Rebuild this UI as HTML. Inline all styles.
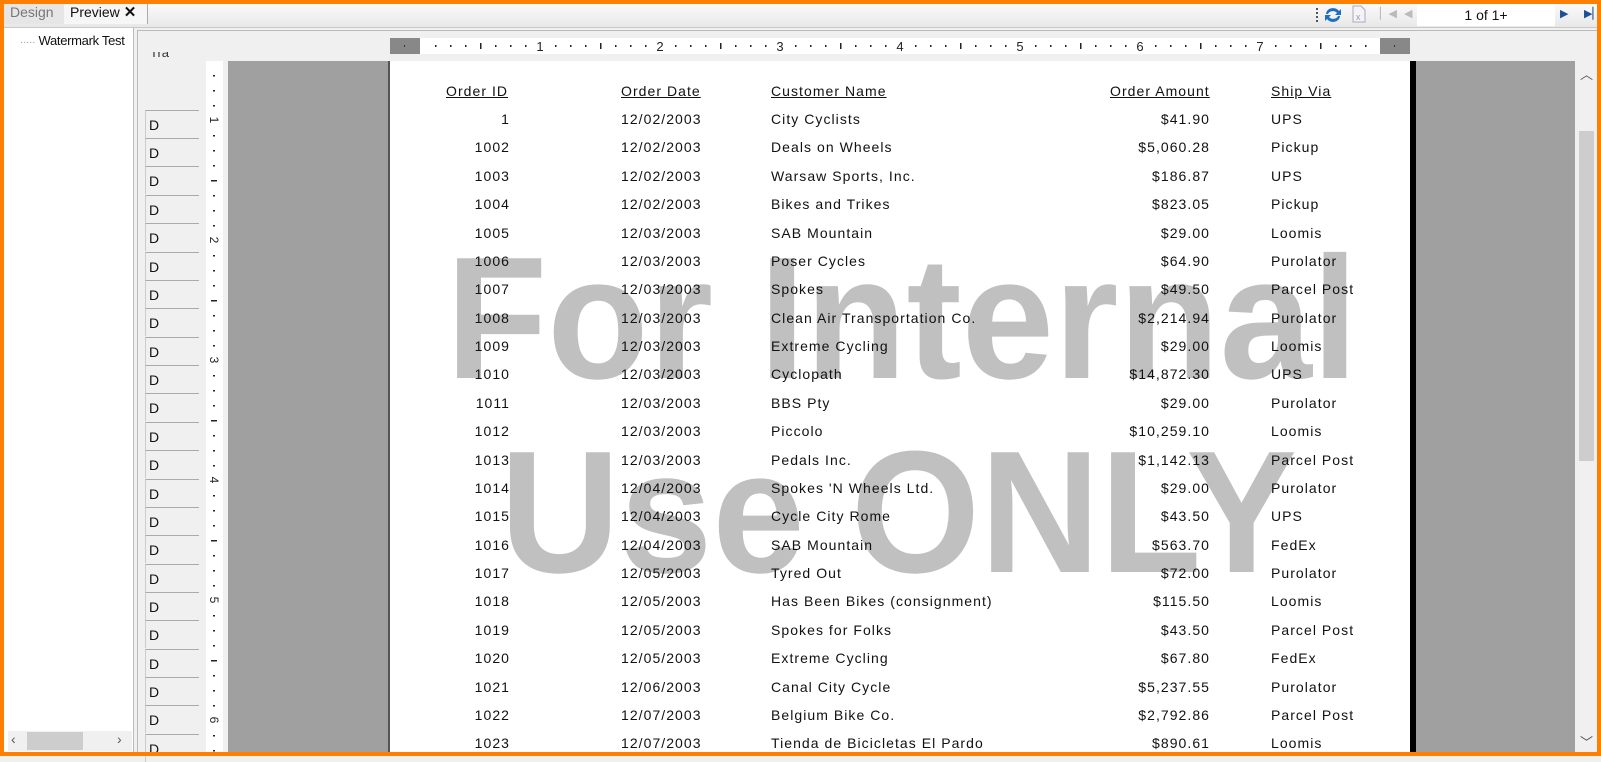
<!DOCTYPE html>
<html><head><meta charset="utf-8"><style>
*{margin:0;padding:0;box-sizing:border-box}
body{width:1601px;height:756px;overflow:hidden;background:#f0f0f0;font-family:"Liberation Sans",Arial,sans-serif;position:relative}
.a{position:absolute}
.tabbar{left:4px;top:4px;width:1593px;height:24px;background:linear-gradient(#fafafa,#e8e8e8);border-bottom:1px solid #c8c8c8}
.tab{top:0;height:24px;font-size:14px;line-height:24px;padding:0 6px}
.left{left:4px;top:28px;width:130px;height:724px;background:#fff;border-right:1px solid #bbb}
.main{left:137px;top:30px;width:1460px;height:722px;background:#f0f0f0;border-top:1px solid #bbb;border-left:1px solid #bbb}
.t{position:absolute;font-size:14px;letter-spacing:1.05px;color:#111;white-space:nowrap;line-height:16px}
.r{text-align:right}
.h{text-decoration:underline}
.d{position:absolute;left:145px;width:54px;height:28px;border-top:1px solid #aaa;border-left:1px solid #ccc;font-size:14px;padding:6px 0 0 3px;color:#111}
</style></head><body>
<div class="a tabbar"></div>
<div class="a tab" style="left:4px;width:60px;color:#777;background:#e6e6e6">Design</div>
<div class="a tab" style="left:64px;width:84px;background:#f6f6f6;border-right:1px solid #aaa;color:#111">Preview <b style="font-size:15px">✕</b></div>
<div class="a" style="left:1316px;top:8px;width:2px;height:14px;border-left:2px dotted #555"></div>
<svg class="a" style="left:1322px;top:5px" width="22" height="20" viewBox="0 0 22 20"><path d="M4 9a7 6 0 0 1 13-3l2-2v6h-6l2-2a5 4 0 0 0-9 1z" fill="#1e6fc0"/><path d="M18 11a7 6 0 0 1-13 3l-2 2v-6h6l-2 2a5 4 0 0 0 9-1z" fill="#1e6fc0"/></svg>
<svg class="a" style="left:1352px;top:5px" width="14" height="18"><path d="M1 1h8l4 4v12H1z" fill="#f4f4f8" stroke="#aab"/><text x="4" y="15" font-size="9" fill="#99a" font-family="Liberation Sans">x</text></svg>
<div class="a" style="left:1380px;top:7px;color:#bbb;font-size:11px">▏◀</div>
<div class="a" style="left:1404px;top:7px;color:#bbb;font-size:11px">◀</div>
<div class="a" style="left:1417px;top:4px;width:138px;height:22px;background:#fff;font-size:14px;text-align:center;line-height:22px;color:#111">1 of 1+</div>
<div class="a" style="left:1560px;top:7px;color:#1e4f96;font-size:11px">▶</div>
<div class="a" style="left:1584px;top:7px;color:#1e4f96;font-size:11px">▶▏</div>
<div class="a left"></div>
<div class="a" style="left:20px;top:33px;font-size:13px;color:#111;letter-spacing:-0.3px"><span style="color:#999;font-size:10px">·····</span> Watermark Test</div>
<div class="a" style="left:8px;top:731px;width:124px;height:20px;background:#f0f0f0"></div>
<div class="a" style="left:27px;top:732px;width:56px;height:18px;background:#cdcdcd"></div>
<div class="a" style="left:11px;top:731px;font-size:14px;color:#555">‹</div>
<div class="a" style="left:117px;top:731px;font-size:14px;color:#555">›</div>
<div class="a main"></div>
<!-- horizontal ruler -->
<div class="a" style="left:390px;top:38px;width:1020px;height:16px;background:#fff"></div>
<div class="a" style="left:390px;top:38px;width:30px;height:16px;background:#888"></div>
<div class="a" style="left:1380px;top:38px;width:30px;height:16px;background:#888"></div>
<svg class="a" style="left:390px;top:38px" width="1020" height="16">
<g fill="#333"><rect x="14" y="7" width="1" height="2"/><rect x="1004" y="7" width="1" height="2"/></g>
<g fill="#222" font-size="13" font-family="Liberation Sans" text-anchor="middle">
<text x="150" y="13">1</text><text x="270" y="13">2</text><text x="390" y="13">3</text><text x="510" y="13">4</text><text x="630" y="13">5</text><text x="750" y="13">6</text><text x="870" y="13">7</text>
</g>
<g fill="#222">
<rect x="45" y="7" width="1.5" height="2"/><rect x="60" y="7" width="1.5" height="2"/><rect x="75" y="7" width="1.5" height="2"/><rect x="90" y="5" width="1.5" height="6"/><rect x="105" y="7" width="1.5" height="2"/><rect x="120" y="7" width="1.5" height="2"/><rect x="135" y="7" width="1.5" height="2"/>
<rect x="165" y="7" width="1.5" height="2"/><rect x="180" y="7" width="1.5" height="2"/><rect x="195" y="7" width="1.5" height="2"/><rect x="210" y="5" width="1.5" height="6"/><rect x="225" y="7" width="1.5" height="2"/><rect x="240" y="7" width="1.5" height="2"/><rect x="255" y="7" width="1.5" height="2"/>
<rect x="285" y="7" width="1.5" height="2"/><rect x="300" y="7" width="1.5" height="2"/><rect x="315" y="7" width="1.5" height="2"/><rect x="330" y="5" width="1.5" height="6"/><rect x="345" y="7" width="1.5" height="2"/><rect x="360" y="7" width="1.5" height="2"/><rect x="375" y="7" width="1.5" height="2"/>
<rect x="405" y="7" width="1.5" height="2"/><rect x="420" y="7" width="1.5" height="2"/><rect x="435" y="7" width="1.5" height="2"/><rect x="450" y="5" width="1.5" height="6"/><rect x="465" y="7" width="1.5" height="2"/><rect x="480" y="7" width="1.5" height="2"/><rect x="495" y="7" width="1.5" height="2"/>
<rect x="525" y="7" width="1.5" height="2"/><rect x="540" y="7" width="1.5" height="2"/><rect x="555" y="7" width="1.5" height="2"/><rect x="570" y="5" width="1.5" height="6"/><rect x="585" y="7" width="1.5" height="2"/><rect x="600" y="7" width="1.5" height="2"/><rect x="615" y="7" width="1.5" height="2"/>
<rect x="645" y="7" width="1.5" height="2"/><rect x="660" y="7" width="1.5" height="2"/><rect x="675" y="7" width="1.5" height="2"/><rect x="690" y="5" width="1.5" height="6"/><rect x="705" y="7" width="1.5" height="2"/><rect x="720" y="7" width="1.5" height="2"/><rect x="735" y="7" width="1.5" height="2"/>
<rect x="765" y="7" width="1.5" height="2"/><rect x="780" y="7" width="1.5" height="2"/><rect x="795" y="7" width="1.5" height="2"/><rect x="810" y="5" width="1.5" height="6"/><rect x="825" y="7" width="1.5" height="2"/><rect x="840" y="7" width="1.5" height="2"/><rect x="855" y="7" width="1.5" height="2"/>
<rect x="885" y="7" width="1.5" height="2"/><rect x="900" y="7" width="1.5" height="2"/><rect x="915" y="7" width="1.5" height="2"/><rect x="930" y="5" width="1.5" height="6"/><rect x="945" y="7" width="1.5" height="2"/><rect x="960" y="7" width="1.5" height="2"/><rect x="975" y="7" width="1.5" height="2"/>
</g>
</svg>
<!-- left label column -->
<div class="a" style="left:150px;top:52px;font-size:13px;color:#333;height:10px;overflow:hidden;line-height:10px"><span style="position:relative;top:-4px">Tra</span></div>
<div class="d" style="top:110px">D</div><div class="d" style="top:138px">D</div><div class="d" style="top:166px">D</div><div class="d" style="top:195px">D</div><div class="d" style="top:223px">D</div><div class="d" style="top:252px">D</div><div class="d" style="top:280px">D</div><div class="d" style="top:308px">D</div><div class="d" style="top:337px">D</div><div class="d" style="top:365px">D</div><div class="d" style="top:393px">D</div><div class="d" style="top:422px">D</div><div class="d" style="top:450px">D</div><div class="d" style="top:479px">D</div><div class="d" style="top:507px">D</div><div class="d" style="top:535px">D</div><div class="d" style="top:564px">D</div><div class="d" style="top:592px">D</div><div class="d" style="top:620px">D</div><div class="d" style="top:649px">D</div><div class="d" style="top:677px">D</div><div class="d" style="top:705px">D</div><div class="d" style="top:734px">D</div>
<!-- vertical ruler -->
<svg class="a" style="left:206px;top:61px" width="17" height="691">
<rect width="17" height="691" fill="#fff"/>
<g fill="#222">
<rect x="7" y="14" width="2" height="1.5"/><rect x="7" y="29" width="2" height="1.5"/><rect x="7" y="44" width="2" height="1.5"/><rect x="7" y="74" width="2" height="1.5"/><rect x="7" y="89" width="2" height="1.5"/><rect x="7" y="104" width="2" height="1.5"/>
<rect x="5" y="119" width="6" height="1.5"/><rect x="5" y="239" width="6" height="1.5"/><rect x="5" y="359" width="6" height="1.5"/><rect x="5" y="479" width="6" height="1.5"/><rect x="5" y="599" width="6" height="1.5"/>
<rect x="7" y="134" width="2" height="1.5"/><rect x="7" y="149" width="2" height="1.5"/><rect x="7" y="164" width="2" height="1.5"/><rect x="7" y="194" width="2" height="1.5"/><rect x="7" y="209" width="2" height="1.5"/><rect x="7" y="224" width="2" height="1.5"/>
<rect x="7" y="254" width="2" height="1.5"/><rect x="7" y="269" width="2" height="1.5"/><rect x="7" y="284" width="2" height="1.5"/><rect x="7" y="314" width="2" height="1.5"/><rect x="7" y="329" width="2" height="1.5"/><rect x="7" y="344" width="2" height="1.5"/>
<rect x="7" y="374" width="2" height="1.5"/><rect x="7" y="389" width="2" height="1.5"/><rect x="7" y="404" width="2" height="1.5"/><rect x="7" y="434" width="2" height="1.5"/><rect x="7" y="449" width="2" height="1.5"/><rect x="7" y="464" width="2" height="1.5"/>
<rect x="7" y="494" width="2" height="1.5"/><rect x="7" y="509" width="2" height="1.5"/><rect x="7" y="524" width="2" height="1.5"/><rect x="7" y="554" width="2" height="1.5"/><rect x="7" y="569" width="2" height="1.5"/><rect x="7" y="584" width="2" height="1.5"/>
<rect x="7" y="614" width="2" height="1.5"/><rect x="7" y="629" width="2" height="1.5"/><rect x="7" y="644" width="2" height="1.5"/><rect x="7" y="674" width="2" height="1.5"/><rect x="7" y="689" width="2" height="1.5"/>
</g>
<g font-size="12" font-family="Liberation Sans" fill="#222">
<text transform="translate(4,59) rotate(90)" text-anchor="middle">1</text>
<text transform="translate(4,179) rotate(90)" text-anchor="middle">2</text>
<text transform="translate(4,299) rotate(90)" text-anchor="middle">3</text>
<text transform="translate(4,419) rotate(90)" text-anchor="middle">4</text>
<text transform="translate(4,539) rotate(90)" text-anchor="middle">5</text>
<text transform="translate(4,659) rotate(90)" text-anchor="middle">6</text>
</g>
</svg>
<!-- gray area & page -->
<div class="a" style="left:228px;top:61px;width:1347px;height:691px;background:#a0a0a0"></div>
<div class="a" style="left:388px;top:61px;width:2px;height:691px;background:#555"></div>
<div class="a" style="left:390px;top:61px;width:1020px;height:691px;background:#fff"></div>
<div class="a" style="left:1410px;top:61px;width:6px;height:691px;background:#000"></div>
<!-- vertical scrollbar -->
<div class="a" style="left:1575px;top:61px;width:22px;height:691px;background:#f0f0f0"></div>
<div class="a" style="left:1579px;top:131px;width:15px;height:330px;background:#cdcdcd"></div>
<div class="a" style="left:1580px;top:64px;font-size:13px;color:#555">︿</div>
<div class="a" style="left:1580px;top:732px;font-size:13px;color:#555">﹀</div>
<!-- watermark -->
<svg class="a" style="left:0;top:0" width="1601" height="756">
<g fill="#c0c0c0" font-family="Liberation Sans" font-weight="bold" font-size="174">
<text x="446" y="378" textLength="912" lengthAdjust="spacingAndGlyphs">For Internal</text>
<text x="500" y="572" textLength="797" lengthAdjust="spacingAndGlyphs">Use ONLY</text>
</g>
</svg>
<!-- table -->
<div class="t h" style="left:446px;top:83px">Order ID</div>
<div class="t h" style="left:621px;top:83px">Order Date</div>
<div class="t h" style="left:771px;top:83px">Customer Name</div>
<div class="t h" style="left:1110px;top:83px">Order Amount</div>
<div class="t h" style="left:1271px;top:83px">Ship Via</div>
<div class="t r" style="left:400px;width:110px;top:111px">1</div><div class="t" style="left:621px;top:111px">12/02/2003</div><div class="t" style="left:771px;top:111px">City Cyclists</div><div class="t r" style="left:1060px;width:150px;top:111px">$41.90</div><div class="t" style="left:1271px;top:111px">UPS</div>
<div class="t r" style="left:400px;width:110px;top:139px">1002</div><div class="t" style="left:621px;top:139px">12/02/2003</div><div class="t" style="left:771px;top:139px">Deals on Wheels</div><div class="t r" style="left:1060px;width:150px;top:139px">$5,060.28</div><div class="t" style="left:1271px;top:139px">Pickup</div>
<div class="t r" style="left:400px;width:110px;top:168px">1003</div><div class="t" style="left:621px;top:168px">12/02/2003</div><div class="t" style="left:771px;top:168px">Warsaw Sports, Inc.</div><div class="t r" style="left:1060px;width:150px;top:168px">$186.87</div><div class="t" style="left:1271px;top:168px">UPS</div>
<div class="t r" style="left:400px;width:110px;top:196px">1004</div><div class="t" style="left:621px;top:196px">12/02/2003</div><div class="t" style="left:771px;top:196px">Bikes and Trikes</div><div class="t r" style="left:1060px;width:150px;top:196px">$823.05</div><div class="t" style="left:1271px;top:196px">Pickup</div>
<div class="t r" style="left:400px;width:110px;top:225px">1005</div><div class="t" style="left:621px;top:225px">12/03/2003</div><div class="t" style="left:771px;top:225px">SAB Mountain</div><div class="t r" style="left:1060px;width:150px;top:225px">$29.00</div><div class="t" style="left:1271px;top:225px">Loomis</div>
<div class="t r" style="left:400px;width:110px;top:253px">1006</div><div class="t" style="left:621px;top:253px">12/03/2003</div><div class="t" style="left:771px;top:253px">Poser Cycles</div><div class="t r" style="left:1060px;width:150px;top:253px">$64.90</div><div class="t" style="left:1271px;top:253px">Purolator</div>
<div class="t r" style="left:400px;width:110px;top:281px">1007</div><div class="t" style="left:621px;top:281px">12/03/2003</div><div class="t" style="left:771px;top:281px">Spokes</div><div class="t r" style="left:1060px;width:150px;top:281px">$49.50</div><div class="t" style="left:1271px;top:281px">Parcel Post</div>
<div class="t r" style="left:400px;width:110px;top:310px">1008</div><div class="t" style="left:621px;top:310px">12/03/2003</div><div class="t" style="left:771px;top:310px">Clean Air Transportation Co.</div><div class="t r" style="left:1060px;width:150px;top:310px">$2,214.94</div><div class="t" style="left:1271px;top:310px">Purolator</div>
<div class="t r" style="left:400px;width:110px;top:338px">1009</div><div class="t" style="left:621px;top:338px">12/03/2003</div><div class="t" style="left:771px;top:338px">Extreme Cycling</div><div class="t r" style="left:1060px;width:150px;top:338px">$29.00</div><div class="t" style="left:1271px;top:338px">Loomis</div>
<div class="t r" style="left:400px;width:110px;top:366px">1010</div><div class="t" style="left:621px;top:366px">12/03/2003</div><div class="t" style="left:771px;top:366px">Cyclopath</div><div class="t r" style="left:1060px;width:150px;top:366px">$14,872.30</div><div class="t" style="left:1271px;top:366px">UPS</div>
<div class="t r" style="left:400px;width:110px;top:395px">1011</div><div class="t" style="left:621px;top:395px">12/03/2003</div><div class="t" style="left:771px;top:395px">BBS Pty</div><div class="t r" style="left:1060px;width:150px;top:395px">$29.00</div><div class="t" style="left:1271px;top:395px">Purolator</div>
<div class="t r" style="left:400px;width:110px;top:423px">1012</div><div class="t" style="left:621px;top:423px">12/03/2003</div><div class="t" style="left:771px;top:423px">Piccolo</div><div class="t r" style="left:1060px;width:150px;top:423px">$10,259.10</div><div class="t" style="left:1271px;top:423px">Loomis</div>
<div class="t r" style="left:400px;width:110px;top:452px">1013</div><div class="t" style="left:621px;top:452px">12/03/2003</div><div class="t" style="left:771px;top:452px">Pedals Inc.</div><div class="t r" style="left:1060px;width:150px;top:452px">$1,142.13</div><div class="t" style="left:1271px;top:452px">Parcel Post</div>
<div class="t r" style="left:400px;width:110px;top:480px">1014</div><div class="t" style="left:621px;top:480px">12/04/2003</div><div class="t" style="left:771px;top:480px">Spokes 'N Wheels Ltd.</div><div class="t r" style="left:1060px;width:150px;top:480px">$29.00</div><div class="t" style="left:1271px;top:480px">Purolator</div>
<div class="t r" style="left:400px;width:110px;top:508px">1015</div><div class="t" style="left:621px;top:508px">12/04/2003</div><div class="t" style="left:771px;top:508px">Cycle City Rome</div><div class="t r" style="left:1060px;width:150px;top:508px">$43.50</div><div class="t" style="left:1271px;top:508px">UPS</div>
<div class="t r" style="left:400px;width:110px;top:537px">1016</div><div class="t" style="left:621px;top:537px">12/04/2003</div><div class="t" style="left:771px;top:537px">SAB Mountain</div><div class="t r" style="left:1060px;width:150px;top:537px">$563.70</div><div class="t" style="left:1271px;top:537px">FedEx</div>
<div class="t r" style="left:400px;width:110px;top:565px">1017</div><div class="t" style="left:621px;top:565px">12/05/2003</div><div class="t" style="left:771px;top:565px">Tyred Out</div><div class="t r" style="left:1060px;width:150px;top:565px">$72.00</div><div class="t" style="left:1271px;top:565px">Purolator</div>
<div class="t r" style="left:400px;width:110px;top:593px">1018</div><div class="t" style="left:621px;top:593px">12/05/2003</div><div class="t" style="left:771px;top:593px">Has Been Bikes (consignment)</div><div class="t r" style="left:1060px;width:150px;top:593px">$115.50</div><div class="t" style="left:1271px;top:593px">Loomis</div>
<div class="t r" style="left:400px;width:110px;top:622px">1019</div><div class="t" style="left:621px;top:622px">12/05/2003</div><div class="t" style="left:771px;top:622px">Spokes for Folks</div><div class="t r" style="left:1060px;width:150px;top:622px">$43.50</div><div class="t" style="left:1271px;top:622px">Parcel Post</div>
<div class="t r" style="left:400px;width:110px;top:650px">1020</div><div class="t" style="left:621px;top:650px">12/05/2003</div><div class="t" style="left:771px;top:650px">Extreme Cycling</div><div class="t r" style="left:1060px;width:150px;top:650px">$67.80</div><div class="t" style="left:1271px;top:650px">FedEx</div>
<div class="t r" style="left:400px;width:110px;top:679px">1021</div><div class="t" style="left:621px;top:679px">12/06/2003</div><div class="t" style="left:771px;top:679px">Canal City Cycle</div><div class="t r" style="left:1060px;width:150px;top:679px">$5,237.55</div><div class="t" style="left:1271px;top:679px">Purolator</div>
<div class="t r" style="left:400px;width:110px;top:707px">1022</div><div class="t" style="left:621px;top:707px">12/07/2003</div><div class="t" style="left:771px;top:707px">Belgium Bike Co.</div><div class="t r" style="left:1060px;width:150px;top:707px">$2,792.86</div><div class="t" style="left:1271px;top:707px">Parcel Post</div>
<div class="t r" style="left:400px;width:110px;top:735px">1023</div><div class="t" style="left:621px;top:735px">12/07/2003</div><div class="t" style="left:771px;top:735px">Tienda de Bicicletas El Pardo</div><div class="t r" style="left:1060px;width:150px;top:735px">$890.61</div><div class="t" style="left:1271px;top:735px">Loomis</div>
<!-- orange frame -->
<div class="a" style="left:0;top:0;width:1601px;height:4px;background:#ff8000"></div>
<div class="a" style="left:0;top:752px;width:1601px;height:4px;background:#ff8000"></div>
<div class="a" style="left:0;top:0;width:4px;height:756px;background:#ff8000"></div>
<div class="a" style="left:1597px;top:0;width:4px;height:756px;background:#ff8000"></div>
</body></html>
